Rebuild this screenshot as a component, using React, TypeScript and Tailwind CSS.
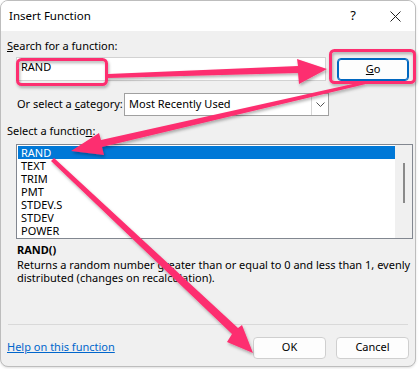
import React from "react";

const PINK = "#fd2f6f";

const items = ["RAND", "TEXT", "TRIM", "PMT", "STDEV.S", "STDEV", "POWER"];

const Overlay = () => (
  <svg
    className="absolute inset-0 pointer-events-none"
    width={419}
    height={369}
    viewBox="0 0 419 369"
  >
    <defs>
      <filter id="sh" x="-20%" y="-20%" width="140%" height="140%">
        <feDropShadow dx="1" dy="2" stdDeviation="1.5" floodColor="#000" floodOpacity="0.3" />
      </filter>
    </defs>
    <g filter="url(#sh)" fill={PINK}>
      {/* search box highlight */}
      <rect x={17.5} y={59.5} width={89} height={25} rx={4} fill="none" stroke={PINK} strokeWidth={3} />
      {/* go button highlight */}
      <rect x={330.5} y={50.5} width={84} height={32} rx={4} fill="none" stroke={PINK} strokeWidth={3} />
      {/* arrow: search -> go */}
      <polygon points="108,74 298,66 297,59 327,69 299,84 298,73 108,78" />
      {/* arrow: go -> list */}
      <polygon points="366,81 101,140 99,133 71,151 104,155 102,147 366,84" />
      {/* arrow: list -> ok */}
      <polygon points="54,158 238,328 242,325 253,353 227,342 232,334 51,161" />
    </g>
  </svg>
);

export default function App() {
  return (
    <div
      className="relative w-[419px] h-[369px] bg-white overflow-hidden text-[11px] text-black"
      style={{ fontFamily: '"Noto Sans", "Segoe UI", sans-serif' }}
    >
      <div className="w-[416px] h-[367px] flex flex-col rounded-lg border border-[#bdbdbd] bg-[#f0f0f0] overflow-hidden shadow">
        {/* title bar */}
        <div className="h-[30px] bg-white flex items-center pl-[8px] pr-[14px]">
          <span className="text-[11.5px]">Insert Function</span>
          <span className="ml-auto mr-[34px] text-[13px]">?</span>
          <svg width="11" height="11" viewBox="0 0 11 11">
            <path d="M0.5 0.5 L10.5 10.5 M10.5 0.5 L0.5 10.5" stroke="#222" strokeWidth="1" />
          </svg>
        </div>

        <div className="flex-1 flex flex-col px-[6px]">
          <div className="mt-[7px] h-[16px] leading-[16px]">
            <u>S</u>earch for a function:
          </div>

          <div className="mt-[3px] flex items-center pl-[9px]">
            <div className="w-[312px] h-[24px] bg-white border border-[#d2d2d2] px-[4px] leading-[18px]">
              RAND
            </div>
            <button className="ml-[11px] w-[72px] h-[23px] rounded-[4px] border border-[#0067c0] bg-[#fdfdfd] shadow-[inset_0_0_0_1px_#0067c0]">
              <u>G</u>o
            </button>
          </div>

          <div className="mt-[12px] flex items-center pl-[10px]">
            <span className="w-[107px] whitespace-nowrap">
              Or select a <u>c</u>ategory:
            </span>
            <div className="w-[205px] h-[23px] bg-white border border-[#a0a0a0] flex items-center">
              <span className="pl-[4px] flex-1">Most Recently Used</span>
              <div className="w-[17px] h-full border-l border-[#d6d6d6] flex items-center justify-center">
                <svg width="9" height="5" viewBox="0 0 9 5">
                  <path d="M0.5 0.5 L4.5 4.5 L8.5 0.5" fill="none" stroke="#555" strokeWidth="1" />
                </svg>
              </div>
            </div>
          </div>

          <div className="mt-[7px] h-[16px] leading-[16px]">
            Select a functio<u>n</u>:
          </div>

          <div className="mt-[5px] ml-[9px] w-[397px] h-[95px] border border-[#828790] bg-white flex">
            <div className="flex-1 pt-[1px] pl-[1px]">
              {items.map((it, i) => (
                <div
                  key={it}
                  className={
                    "h-[13px] leading-[13px] pl-[3px] " +
                    (i === 0 ? "bg-[#0078d7] text-white" : "")
                  }
                >
                  {it}
                </div>
              ))}
            </div>
            <div className="w-[17px] bg-[#f0f0f0] flex justify-center pt-[18px]">
              <div className="w-[2px] h-[40px] bg-[#8a8a8a]" />
            </div>
          </div>

          <div className="mt-[3px] ml-[10px] font-bold h-[16px] leading-[16px]">RAND()</div>
          <div className="mt-0 ml-[10px] leading-[13px] w-[398px]">
            Returns a random number greater than or equal to 0 and less than 1, evenly distributed
            (changes on recalculation).
          </div>

          <div className="mt-auto border-t border-[#d9d9d9] mx-[1px]" />

          <div className="h-[41px] flex items-center pt-[4px]">
            <a className="text-[#0066cc] underline">Help on this function</a>
            <button className="ml-auto w-[73px] h-[22px] rounded-[4px] border border-[#cfcfcf] bg-[#fdfdfd]">
              OK
            </button>
            <button className="ml-[10px] w-[73px] h-[22px] rounded-[4px] border border-[#cfcfcf] bg-[#fdfdfd]">
              Cancel
            </button>
          </div>
        </div>
      </div>
      <Overlay />
    </div>
  );
}
